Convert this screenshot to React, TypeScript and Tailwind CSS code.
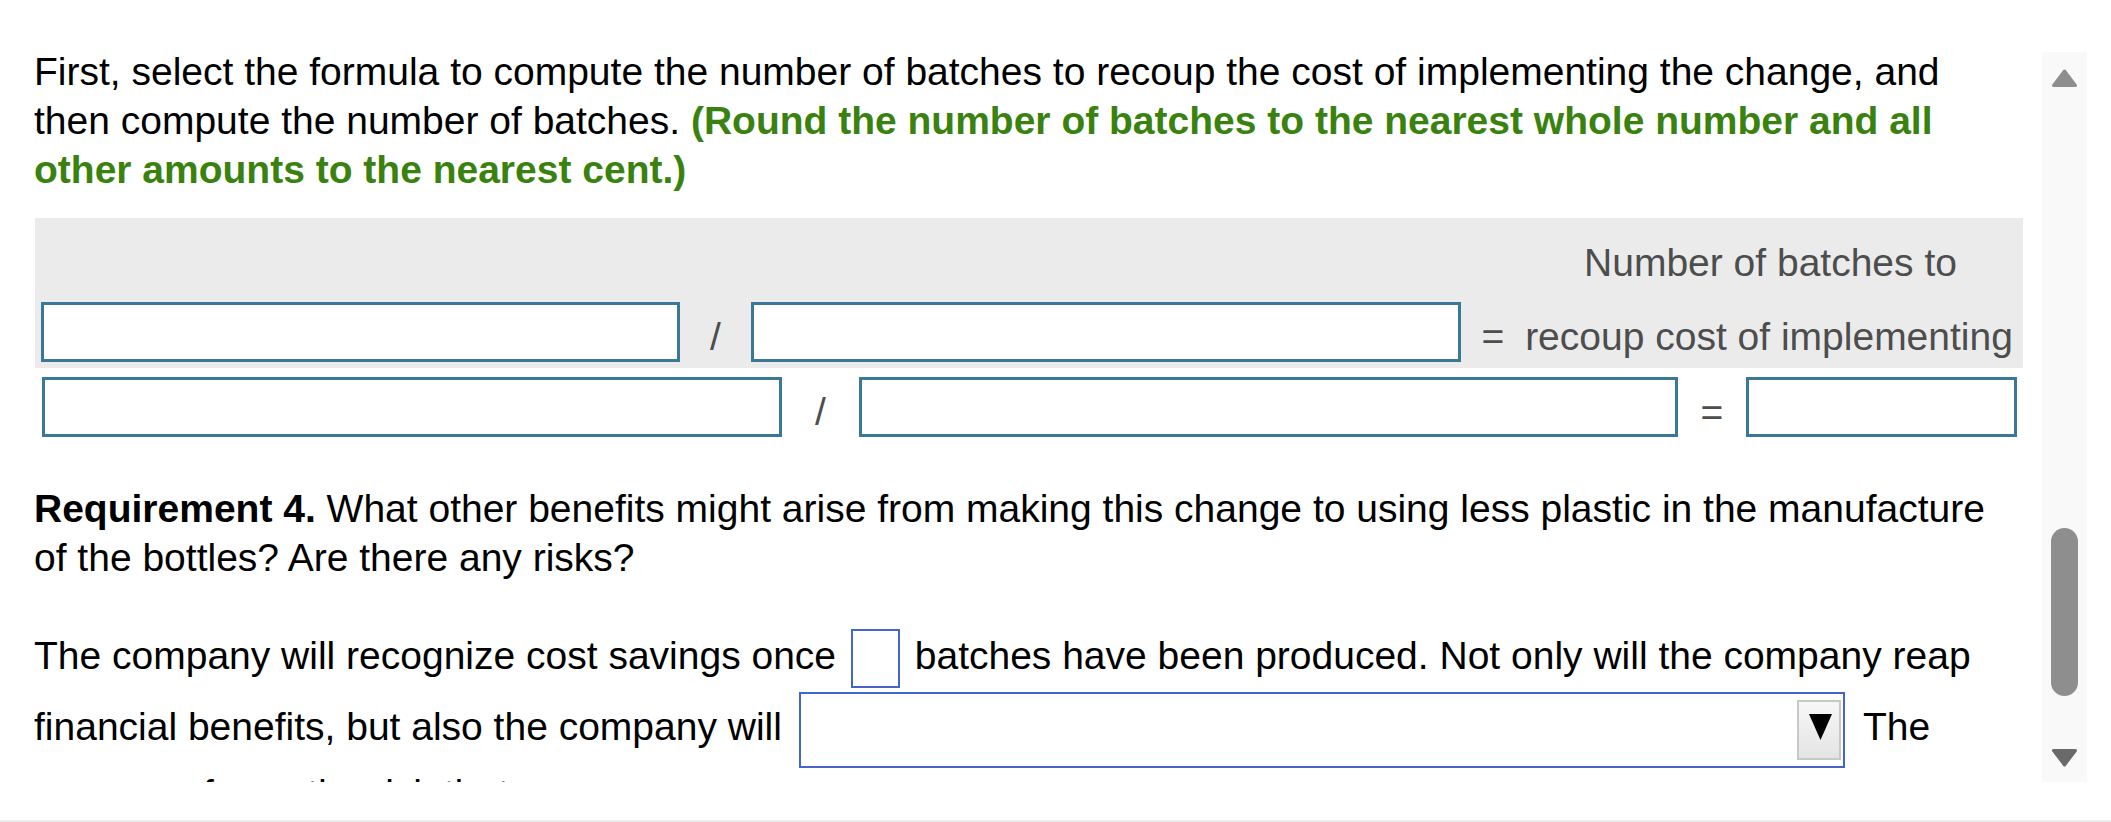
import React from "react";

function Box({ w, extra = "" }: { w: string; extra?: string }) {
  return <div className={`${w} h-[60px] border-[3px] border-[#3a7898] bg-white shrink-0 ${extra}`} />;
}

export default function App() {
  return (
    <div className="w-[2111px] h-[822px] bg-white overflow-hidden flex flex-col font-['Liberation_Sans',Arial,sans-serif] text-[39px] leading-[48.75px] text-black">
      <div className="flex flex-row h-[782px] shrink-0">
        <div className="w-[2042px] h-[782px] overflow-hidden pl-[34px] pr-[19px] shrink-0">
          <p className="pt-[48px]">
            First, select the formula to compute the number of batches to recoup the cost of implementing the change, and then compute the number of batches.{" "}
            <span className="font-bold text-[#3a820f]">
              (Round the number of batches to the nearest whole number and all other amounts to the nearest cent.)
            </span>
          </p>

          <div className="mt-[24px] ml-[1px] w-[1988px] h-[150px] bg-[#ebebeb] pt-[21px] pb-[6px] flex flex-col text-[#4d4d4d]">
            <div className="flex flex-row pl-[6px]">
              <div className="w-[639px] shrink-0" />
              <div className="w-[71px] shrink-0" />
              <div className="w-[710px] shrink-0" />
              <div className="w-[64px] shrink-0" />
              <div className="w-[488px] shrink-0 text-center whitespace-nowrap pl-[3px]">Number of batches to</div>
            </div>
            <div className="flex flex-row items-center pl-[6px] mt-[14px] h-[60px]">
              <Box w="w-[639px]" />
              <div className="w-[71px] shrink-0 text-center pt-[10px]">/</div>
              <Box w="w-[710px]" />
              <div className="w-[64px] shrink-0 text-center pt-[10px]">=</div>
              <div className="w-[488px] shrink-0 text-center whitespace-nowrap pt-[10px]">recoup cost of implementing</div>
            </div>
          </div>

          <div className="flex flex-row items-center mt-[9px] ml-[8px] h-[60px] text-[#4d4d4d]">
            <Box w="w-[740px]" />
            <div className="w-[77px] shrink-0 text-center pt-[10px]">/</div>
            <Box w="w-[819px]" />
            <div className="w-[68px] shrink-0 text-center pt-[12px]">=</div>
            <Box w="w-[271px]" />
          </div>

          <p className="mt-[48px]">
            <span className="font-bold">Requirement 4.</span> What other benefits might arise from making this change to using less plastic in the manufacture of the bottles? Are there any risks?
          </p>

          <p className="mt-[44px]">
            The company will recognize cost savings once{" "}
            <span className="inline-block align-middle w-[49px] h-[59px] border-2 border-[#4466cc] bg-white mx-[4px] my-[2px]" />{" "}
            batches have been produced. Not only will the company reap financial benefits, but also the company will{" "}
            <span className="inline-flex align-middle w-[1046px] h-[76px] border-2 border-[#4466cc] bg-white ml-[6px] mr-[8px] my-[2px] justify-end items-start pt-[6px] pr-[2px]">
              <span className="flex w-[44px] h-[60px] border-2 border-[#c8c8c8] bg-gradient-to-b from-[#f7f7f7] to-[#e4e4e4] justify-center items-start pt-[12px] pl-[3px]">
                <svg width="23" height="26" viewBox="0 0 23 26">
                  <path d="M0 0 L23 0 L11.5 26 Z" fill="#000" />
                </svg>
              </span>
            </span>{" "}
            The company faces the risk that{" "}
            <span className="inline-block align-middle w-[1700px] h-[76px] border-2 border-[#4466cc] bg-white mx-[4px] my-[2px]" />
          </p>
        </div>

        <div className="w-[45px] mt-[52px] h-[730px] bg-[#f9f9f9] flex flex-col items-center pt-[16px] shrink-0">
          <svg width="27" height="20" viewBox="0 0 27 20" className="shrink-0">
            <path d="M13.5 3 L24.5 17.5 L2.5 17.5 Z" fill="#8e8e8e" stroke="#8e8e8e" strokeWidth="3" strokeLinejoin="round" />
          </svg>
          <div className="w-[27px] h-[168px] mt-[440px] rounded-full bg-[#8e8e8e] shrink-0" />
          <svg width="27" height="20" viewBox="0 0 27 20" className="mt-[52px] shrink-0">
            <path d="M2.5 2.5 L24.5 2.5 L13.5 17 Z" fill="#6a6a6a" stroke="#6a6a6a" strokeWidth="3" strokeLinejoin="round" />
          </svg>
        </div>
      </div>
      <div className="h-[38px] shrink-0" />
      <div className="h-[2px] bg-[#ececec] shrink-0" />
    </div>
  );
}
